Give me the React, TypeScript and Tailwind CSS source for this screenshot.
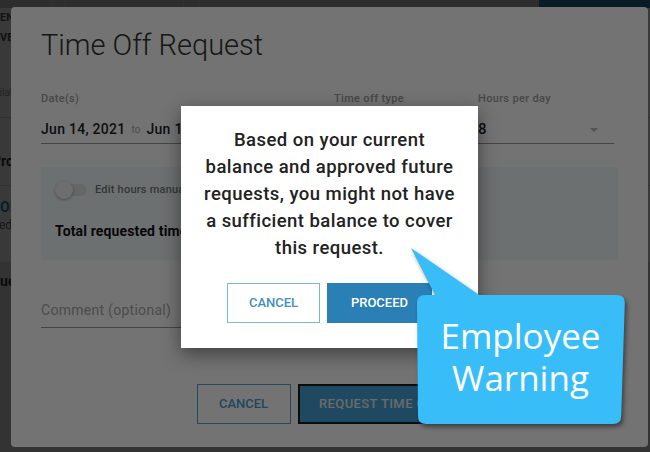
import React from "react";

const BackgroundPage = () => {
  return (
    <div className="w-full h-full bg-white flex flex-col font-['Roboto',sans-serif] whitespace-nowrap">
      <div className="h-[8px] flex bg-[#cbcbcb]">
        <div className="w-[52px] border-r border-[#dadada]" />
        <div className="w-[14px] border-r border-[#dadada]" />
        <div className="w-[118px] border-r border-[#dadada]" />
        <div className="w-[15px] border-r border-[#dadada]" />
        <div className="flex-1" />
        <div className="w-[111px] bg-[#307bb4]" />
      </div>
      <div className="h-[44px] flex flex-col text-[11px] font-bold leading-[20px] text-[#555]">
        <span>ENTITLEMENT</span>
        <span>VESTED</span>
      </div>
      <div className="h-[66px] pt-[34px] border-b border-[#dcdcdc]">
        <span className="block text-[10px] leading-[14px] text-[#999] ml-[-17px]">Available</span>
      </div>
      <div className="h-[68px] pt-[34px] border-b border-[#dcdcdc]">
        <span className="block text-[14px] font-bold leading-[18px] text-[#333] ml-[-8px]">Progress</span>
      </div>
      <div className="h-[76px] pt-[12px] flex flex-col leading-[18px]">
        <span className="text-[14px] font-bold text-[#2a7fb5]">ON DEMAND</span>
        <span className="text-[12px] text-[#666] ml-[-15px]">Used</span>
      </div>
      <div className="flex-1 bg-[#e2e2e2] pt-[10px]">
        <span className="block text-[14px] font-bold leading-[18px] text-[#333] ml-[-9px]">Due</span>
      </div>
    </div>
  );
};

const TimeOffModal = () => {
  return (
    <div className="w-[637px] h-[440px] bg-white rounded-[4px] flex flex-col px-[30px] pt-[18px] font-['Roboto',sans-serif]">
      <h1 className="text-[29px] font-light text-[#333] leading-[40px]">Time Off Request</h1>

      <div className="mt-[27px] flex">
        <div className="w-[293px] flex flex-col">
          <span className="text-[11px] font-medium text-[#9e9e9e] tracking-[0.03em] leading-[14px]">Date(s)</span>
          <div className="mt-[10px] h-[28px] flex items-center gap-[6px] border-b border-[#9a9a9a]">
            <span className="text-[14px] font-medium text-[#222] tracking-[0.02em]">Jun 14, 2021</span>
            <span className="text-[10px] text-[#aaa]">to</span>
            <span className="text-[14px] font-medium text-[#222] tracking-[0.02em]">Jun 18, 2021</span>
          </div>
        </div>
        <div className="w-[144px] flex flex-col">
          <span className="text-[11px] font-medium text-[#9e9e9e] tracking-[0.03em] leading-[14px]">Time off type</span>
          <div className="mt-[10px] h-[28px] flex items-center border-b border-[#9a9a9a] mr-[18px]">
            <span className="text-[14px] font-medium text-[#222]">Vacation</span>
          </div>
        </div>
        <div className="w-[136px] flex flex-col">
          <span className="text-[11px] font-medium text-[#9e9e9e] tracking-[0.03em] leading-[14px]">Hours per day</span>
          <div className="mt-[10px] h-[28px] flex items-center justify-between border-b border-[#9a9a9a]">
            <span className="text-[15px] font-medium text-[#222]">8</span>
            <svg width="8" height="4" viewBox="0 0 8 4" className="mr-[16px]">
              <path d="M0 0 L8 0 L4 4 Z" fill="#b8b8b8" />
            </svg>
          </div>
        </div>
      </div>

      <div className="mt-[23px] h-[93px] w-[577px] bg-[#f2f8fa] px-[14px] pt-[14px] flex flex-col">
        <div className="flex items-center gap-[8px]">
          <div className="relative w-[32px] h-[18px] flex items-center">
            <div className="w-[30px] h-[12px] rounded-full bg-[#e2e2e2] ml-[2px]" />
            <div className="absolute left-0 top-0 w-[18px] h-[18px] rounded-full bg-[#f4f4f4] shadow-[0_1px_3px_rgba(0,0,0,0.35)]" />
          </div>
          <span className="text-[11px] font-medium text-[#777] tracking-[0.02em]">Edit hours manually</span>
        </div>
        <div className="mt-[22px] text-[14px] font-bold text-[#111] tracking-[0.01em]">Total requested time: 40 hours</div>
      </div>

      <div className="mt-[40px] w-[573px] h-[28px] flex items-end pb-[6px] border-b border-[#9a9a9a]">
        <span className="text-[14px] text-[#a8a8a8] tracking-[0.02em]">Comment (optional)</span>
      </div>

      <div className="mt-[56px] flex justify-center gap-[7px] w-[577px]">
        <div className="h-[40px] w-[94px] border border-[#5a9fcd] flex items-center justify-center text-[13px] font-medium text-[#4a9bd0]">
          CANCEL
        </div>
        <div className="h-[40px] w-[165px] bg-[#45a3d8] border-2 border-[#1a1a1a] flex items-center justify-center text-[13px] font-medium tracking-[0.4px] text-[#eaeaea]">
          REQUEST TIME OFF
        </div>
      </div>
    </div>
  );
};

const WarningDialog = () => {
  return (
    <div className="w-[297px] h-[242px] bg-white shadow-[0_6px_18px_rgba(0,0,0,0.45)] flex flex-col items-center pt-[21px] font-['Roboto',sans-serif]">
      <p className="text-[18.5px] font-medium tracking-[0.45px] leading-[27px] text-[#222] text-center w-[260px]">
        Based on your current balance and approved future requests, you might not have a sufficient balance to cover this request.
      </p>
      <div className="mt-[21px] flex gap-[7px]">
        <div className="h-[40px] w-[93px] border border-[#7fb5da] flex items-center justify-center text-[13px] font-medium text-[#3f8fc6]">
          CANCEL
        </div>
        <div className="h-[40px] w-[105px] bg-[#2a7fb5] flex items-center justify-center text-[13px] font-medium text-white">
          PROCEED
        </div>
      </div>
    </div>
  );
};

const Callout = () => {
  return (
    <div className="relative w-[226px] h-[186px]">
      <svg
        width="226"
        height="186"
        viewBox="0 0 226 186"
        className="absolute left-0 top-0 drop-shadow-[2px_3px_2px_rgba(0,0,0,0.45)]"
      >
        <path d="M6 3 L31 52 L77 52 Z" fill="#38bdf8" />
        <path
          d="M20 50 L212 50 Q220 50 219.8 58 L216.2 171 Q216 179 208 179 L21 179 Q13 179 13 171 L12 58 Q12 50 20 50 Z"
          fill="#38bdf8"
        />
      </svg>
      <div className="absolute left-[12px] top-[70px] w-[207px] flex flex-col items-center text-white text-[35px] leading-[42px] font-['Open_Sans',sans-serif]">
        <span>Employee</span>
        <span>Warning</span>
      </div>
    </div>
  );
};

export default function App() {
  return (
    <div className="relative w-[650px] h-[452px] overflow-hidden">
      <BackgroundPage />
      <div className="absolute inset-0 bg-black/50" />
      <div className="absolute left-[11px] top-[7px]">
        <TimeOffModal />
      </div>
      <div className="absolute inset-0 bg-black/55" />
      <div className="absolute left-[181px] top-[106px]">
        <WarningDialog />
      </div>
      <div className="absolute left-[405px] top-[245px]">
        <Callout />
      </div>
    </div>
  );
}
